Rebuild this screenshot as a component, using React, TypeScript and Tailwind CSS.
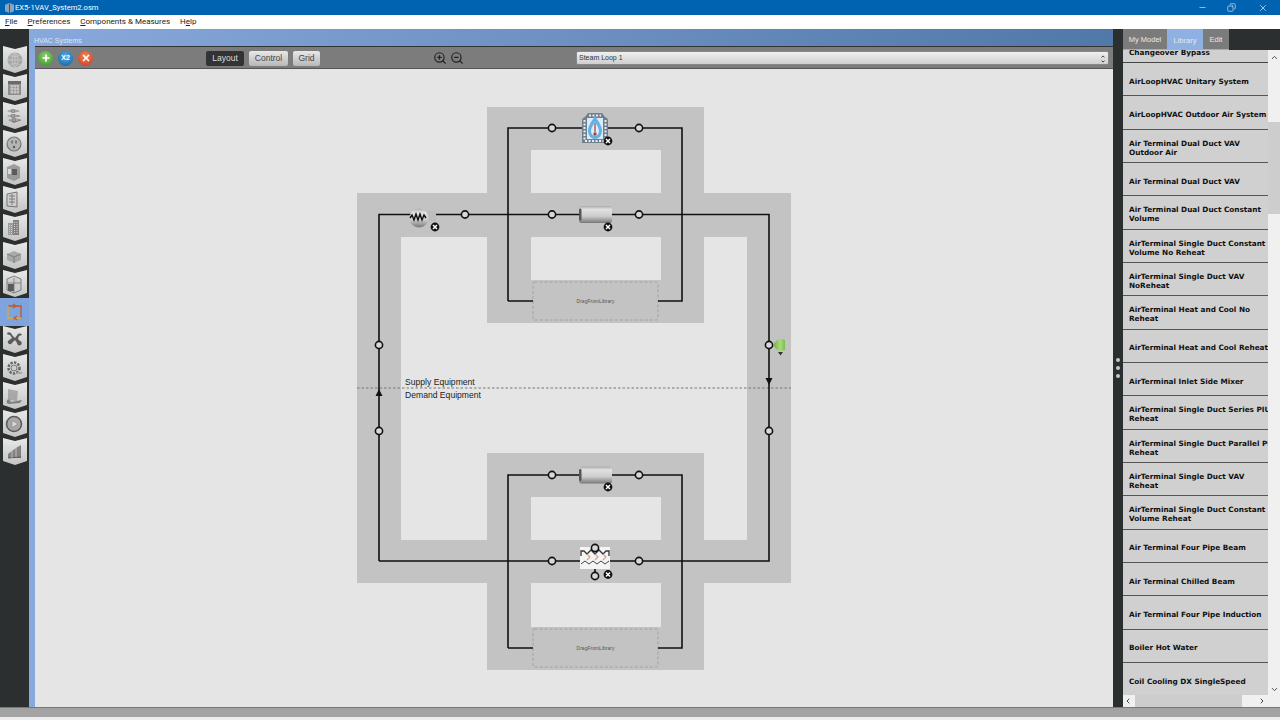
import { useId } from "react";
import { ChevronUp, ChevronDown, ChevronLeft, ChevronRight, Minus, X, Copy, Plus, ZoomIn, ZoomOut } from "lucide-react";

const font = "font-['Liberation_Sans',sans-serif]";

const railIcons = [
  // globe
  <g key="a"><circle cx="11" cy="11" r="7.5" fill="#999" /><path d="M4 11h14M11 3.5v15M6 6c3 2 7 2 10 0M6 16c3-2 7-2 10 0M11 3.5c-4 4-4 11 0 15M11 3.5c4 4 4 11 0 15" stroke="#ccc" strokeWidth=".7" fill="none" /></g>,
  // calendar
  <g key="b"><rect x="4" y="4" width="13" height="14" fill="#777" /><rect x="4" y="4" width="13" height="3" fill="#444" /><path d="M6 9h9M6 12h9M6 15h9M8 8v9M11 8v9M14 8v9" stroke="#ddd" strokeWidth=".9" /></g>,
  // materials stack
  <g key="c"><path d="M3 6l6-2 7 2-7 2zM3 11l6-2 8 2-8 2zM4 15l6-2 8 2-8 3z" fill="#666" /><path d="M5 6h8M5 11h9M6 15h9" stroke="#ddd" strokeWidth=".8" strokeDasharray="2 1" /></g>,
  // outlet
  <g key="d"><circle cx="10" cy="11" r="7" fill="#aaa" stroke="#555" strokeWidth="1.2" /><path d="M8 7.500v3M12 7.500v3" stroke="#333" strokeWidth="1.3" /><circle cx="10" cy="14" r="1.2" fill="#333" /></g>,
  // cube cut
  <g key="e"><path d="M3 6l7-3 6 3v11l-6 3-7-3z" fill="#888" /><rect x="8" y="8" width="5" height="6" fill="#333" /><rect x="4" y="8" width="3" height="5" fill="#ddd" /></g>,
  // facade
  <g key="f"><path d="M3 5l10-2v15l-10-1z" fill="#ccc" stroke="#555" /><path d="M5 7h6M5 10h6M5 13h6M8 5v11" stroke="#555" strokeWidth=".9" /></g>,
  // building
  <g key="g"><rect x="4" y="6" width="5" height="12" fill="#888" /><rect x="9" y="3" width="6" height="15" fill="#666" /><path d="M10.500 5v12M13 5v12M5.500 8v9M7.500 8v9" stroke="#ddd" strokeWidth=".9" strokeDasharray="1 1" /></g>,
  // slab
  <g key="h"><path d="M3 9l7-3 7 3v6l-7 3-7-3z" fill="#999" /><path d="M3 9l7 3 7-3M10 12v6" stroke="#555" strokeWidth=".8" fill="none" /></g>,
  // thermal zones
  <g key="i"><path d="M3 6l7-3 7 3v11l-7 3-7-3z" fill="#ccc" stroke="#555" strokeWidth=".9" /><rect x="4" y="11" width="6" height="7" fill="#333" /><path d="M10 5v15M3 10h14" stroke="#555" strokeWidth=".8" /></g>,
  // hvac loop, selected
  <g key="j" fill="none" strokeWidth="1.3"><path d="M4 5h13v12" stroke="#c0582a" /><path d="M17 17H4V5" stroke="#d9a93a" /><path d="M9 3l3 2-3 2M13 15l-3 2 3 2" stroke="#c0582a" /></g>,
  // tools
  <g key="k"><path d="M3 4c2-2 5 0 5 2l3 3 3-4c2-1 4 0 4 1l-3 1-1 3 2 2c2 0 2 3 1 4-2 1-4 0-4-2l-2-3-4 4c-2 1-4-1-3-3l4-3-2-3c-2 0-3-1-3-2z" fill="#333" /></g>,
  // gear
  <g key="l"><circle cx="10" cy="11" r="5.500" fill="none" stroke="#444" strokeWidth="2.500" strokeDasharray="2.400 1.200" /><circle cx="10" cy="11" r="3" fill="#ccc" stroke="#555" /><path d="M13 15l6 0 -2 2h-5z" fill="#999" /></g>,
  // scroll
  <g key="m"><path d="M4 4l10 2-1 10-9-1z" fill="#999" /><path d="M3 15c2-1 3 0 4 2l11-2-2 3-11 1c-2 0-3-2-2-4z" fill="#666" /></g>,
  // play
  <g key="n"><circle cx="10" cy="11" r="7.500" fill="#999" stroke="#333" strokeWidth="1.600" /><path d="M8 7.500l6 3.500-6 3.500z" fill="#ddd" stroke="#666" strokeWidth=".6" /></g>,
  // results
  <g key="o"><path d="M4 17V13l4-3 4-3 5-3v13z" fill="#666" /><path d="M4 17l13-1" stroke="#333" /><path d="M8 10v7M12 7v9" stroke="#ccc" strokeWidth=".8" /></g>,
];

const items: [string, string?][] = [
  ["AirLoopHVAC Unitary System"],
  ["AirLoopHVAC Outdoor Air System"],
  ["Air Terminal Dual Duct VAV", "Outdoor Air"],
  ["Air Terminal Dual Duct VAV"],
  ["Air Terminal Dual Duct Constant", "Volume"],
  ["AirTerminal Single Duct Constant", "Volume No Reheat"],
  ["AirTerminal Single Duct VAV", "NoReheat"],
  ["AirTerminal Heat and Cool No", "Reheat"],
  ["AirTerminal Heat and Cool Reheat"],
  ["AirTerminal Inlet Side Mixer"],
  ["AirTerminal Single Duct Series PIU", "Reheat"],
  ["AirTerminal Single Duct Parallel PIU", "Reheat"],
  ["AirTerminal Single Duct VAV", "Reheat"],
  ["AirTerminal Single Duct Constant", "Volume Reheat"],
  ["Air Terminal Four Pipe Beam"],
  ["Air Terminal Chilled Beam"],
  ["Air Terminal Four Pipe Induction"],
  ["Boiler Hot Water"],
  ["Coil Cooling DX SingleSpeed"],
];

function RailButton({ children, active }: { children: React.ReactNode; active?: boolean }) {
  return (
    <div className={`w-[29px] h-[28px] relative ${active ? "bg-[#7fa3dc]" : ""}`}>
      <div className={`absolute left-[3px] top-0 w-[24px] h-[27px] flex items-center justify-center [clip-path:polygon(0_0,50%_3px,100%_0,100%_85%,50%_100%,0_85%)] ${active ? "" : "bg-gradient-to-b from-[#e8e8e8] to-[#c4c4c4]"}`}>
        <svg width="22" height="22" viewBox="0 0 22 22" className={active ? "" : "opacity-75"}>{children}</svg>
      </div>
    </div>
  );
}

function Node({ x, y }: { x: number; y: number }) {
  return <circle cx={x} cy={y} r="3.600" fill="#d8d8d8" stroke="#111" strokeWidth="1.600" />;
}

function Remove({ x, y }: { x: number; y: number }) {
  return (
    <g>
      <circle cx={x} cy={y} r="4.400" fill="#111" />
      <path d={`M${x - 2} ${y - 2}l4 4M${x + 2} ${y - 2}l-4 4`} stroke="#fff" strokeWidth="1.500" />
    </g>
  );
}

function Pipe({ x, y, grad }: { x: number; y: number; grad: string }) {
  return (
    <g>
      <rect x={x - 16.5} y={y - 8.5} width="33" height="17" rx="2.500" fill={`url(#${grad})`} />
      <rect x={x - 16.5} y={y - 6} width="2.500" height="12" rx="1.200" fill="#555" />
    </g>
  );
}

function DropZone({ y }: { y: number }) {
  return (
    <g>
      <rect x="533" y={y} width="125" height="38" rx="1.500" fill="#c3c3c3" stroke="#999" strokeWidth=".8" strokeDasharray="3 2" />
      <text x="595.500" y={y + 21} textAnchor="middle" fontSize="5" fill="#555" fontFamily="Liberation Sans, sans-serif">DragFromLibrary</text>
    </g>
  );
}

function Diagram() {
  const id = useId().replace(/:/g, "");
  const grad = `${id}p`;
  const green = `${id}g`;
  const band = "#c3c3c3";
  const line = "#111";
  return (
    <svg className="absolute left-0 top-0" width="1078" height="638" viewBox="35 69 1078 638">
      <defs>
        <linearGradient id={grad} x1="0" y1="0" x2="0" y2="1">
          <stop offset="0" stopColor="#aaa" />
          <stop offset=".2" stopColor="#e2e2e2" />
          <stop offset=".6" stopColor="#ccc" />
          <stop offset="1" stopColor="#777" />
        </linearGradient>
        <linearGradient id={green} x1="0" y1="0" x2="1" y2="0">
          <stop offset="0" stopColor="#6fae3c" />
          <stop offset=".6" stopColor="#a8dc7a" />
          <stop offset="1" stopColor="#7cbf4e" />
        </linearGradient>
      </defs>
      {/* grey bands */}
      <rect x="487" y="107" width="217" height="216" fill={band} />
      <rect x="487" y="453" width="217" height="217" fill={band} />
      <rect x="357" y="193" width="434" height="44" fill={band} />
      <rect x="357" y="540" width="434" height="43" fill={band} />
      <rect x="357" y="193" width="44" height="390" fill={band} />
      <rect x="747" y="193" width="44" height="390" fill={band} />
      <rect x="531" y="150" width="130" height="43" fill="#e5e5e5" />
      <rect x="531" y="237" width="130" height="43" fill="#e5e5e5" />
      <rect x="531" y="497" width="130" height="43" fill="#e5e5e5" />
      <rect x="531" y="583" width="130" height="44" fill="#e5e5e5" />
      <DropZone y={282} />
      <DropZone y={629} />
      {/* supply / demand divider */}
      <path d="M357 388H791" stroke="#777" strokeWidth="1" strokeDasharray="2.500 2" />
      <text x="405" y="385" fontSize="8.600" fill="#222" fontFamily="Liberation Sans, sans-serif">Supply Equipment</text>
      <text x="405" y="398" fontSize="8.600" fill="#222" fontFamily="Liberation Sans, sans-serif">Demand Equipment</text>
      {/* pipes */}
      <g fill="none" stroke={line} strokeWidth="1.600">
        <path d="M508 301V128H682V301H658M533 301H508" />
        <path d="M508 648V475H682V648H658M533 648H508" />
        <path d="M379 561V214.500H769V561H379" />
      </g>
      <path d="M375.500 396l3.500-7 3.500 7zM765.500 378l3.500 7 3.500-7z" fill={line} />
      {[
        [552, 128], [639, 128], [552, 214.5], [639, 214.5], [465, 214.5], [379, 345], [769, 345], [379, 431], [769, 431],
        [552, 475], [639, 475], [552, 561], [639, 561],
      ].map(([x, y]) => <Node key={`${x}-${y}`} x={x} y={y} />)}
      {/* boiler */}
      <path d="M582 143V120q0-2 3-3l3-4h14l3 4q3 1 3 3v23z" fill="#6f7f8c" />
      <path d="M584.500 120v21M605.500 120v21M585 141h20M589 115.500h12" stroke="#e8eef2" strokeWidth="2" strokeDasharray="2 1.500" fill="none" />
      <rect x="587" y="118" width="16" height="21" fill="#dcebf5" />
      <path d="M595 116c4 6 7 10 7 15a7 8 0 0 1-14 0c0-5 3-9 7-15z" fill="#62b2e6" />
      <path d="M595 122c2 3 4 6 4 9a4 5 0 0 1-8 0c0-3 2-6 4-9z" fill="#d8eefa" />
      <path d="M595 123v9" stroke="#b5393a" strokeWidth="1.200" />
      <circle cx="595" cy="134" r="1.700" fill="#b5393a" />
      <Remove x={608} y={141} />
      {/* supply pipe and heater */}
      <Pipe x={595.5} y={214.5} grad={grad} />
      <Remove x={608} y={227} />
      <rect x="425" y="211" width="11" height="10" fill="#bdbdbd" />
      <circle cx="419" cy="218" r="9.500" fill={`url(#${grad})`} />
      <path d="M410 218l2-3 2 5 2-6 2 6 2-6 2 6 2-5 2 3" stroke="#111" strokeWidth="1.400" fill="none" />
      <Remove x={435} y={227} />
      {/* demand pipe */}
      <Pipe x={595.5} y={475} grad={grad} />
      <Remove x={608} y={487} />
      {/* water-to-air coil */}
      <rect x="580" y="547" width="30" height="22" fill="#f4f4f4" />
      <path d="M581 556v-5h3l3 3 4-4 4 4 4-4 4 4 3-3h3v5" stroke="#333" strokeWidth="1.300" fill="none" />
      <path d="M581 564l4-3 4 3 4-3 4 3 4-3 4 3 4-3" stroke="#444" strokeWidth="1" fill="none" />
      <path d="M587 554l3 3-3 3M595 554l3 3-3 3M603 554l3 3-3 3" stroke="#d8a08c" strokeWidth="1.200" fill="none" />
      <path d="M595 551v-3M595 569v4" stroke={line} strokeWidth="1.600" />
      <Node x={595} y={548} />
      <Node x={595} y={576} />
      <Remove x={608} y={574.5} />
      {/* air outlet marker */}
      <path d="M773 345l4-5 q4-2 8 0v10q-4 1.500-8 0z" fill={`url(#${green})`} />
      <path d="M778 352h5l-2.500 3.500z" fill="#333" />
    </svg>
  );
}

export default function App() {
  return (
    <div className={`${font} w-[1280px] h-[720px] overflow-hidden flex flex-col bg-[#2b2f30]`}>
      {/* title bar */}
      <div className="h-[15px] bg-[#0063b1] flex items-center text-white text-[7.600px] pl-[5px] font-['Roboto',sans-serif]">
        <svg width="9" height="10" viewBox="0 0 10 11" className="mr-[1px]">
          <path d="M5 0l5 2v7l-5 2-5-2V2z" fill="#8aa4bd" />
          <path d="M5 1v10" stroke="#33506b" />
        </svg>
        <span>EX5-1VAV_System2.osm</span>
        <div className="ml-auto flex items-center h-full">
          <Minus className="w-[9px] h-[9px] mr-[20px]" strokeWidth={1.5} />
          <Copy className="w-[9px] h-[9px] mr-[22px] -scale-x-100" strokeWidth={1.5} />
          <X className="w-[10px] h-[10px] mr-[12px]" strokeWidth={1.5} />
        </div>
      </div>
      {/* menu */}
      <div className="h-[14px] bg-white flex items-center text-[8px] text-[#222] pl-[5px] gap-[10px] font-['Roboto',sans-serif]">
        <span><u>F</u>ile</span>
        <span><u>P</u>references</span>
        <span><u>C</u>omponents &amp; Measures</span>
        <span>H<u>e</u>lp</span>
      </div>

      <div className="flex-1 flex min-h-0">
        {/* left rail */}
        <div className="w-[29px] pt-[17px] flex flex-col shrink-0">
          {railIcons.map((icon, i) => (
            <RailButton key={i} active={i === 9}>{icon}</RailButton>
          ))}
        </div>

        {/* main area */}
        <div className="w-[1084px] flex flex-col bg-gradient-to-r from-[#88a9dc] to-[#5078a8]">
          <div className="h-[17px] pl-[5px] pt-[7px] flex items-center text-[7px] text-[#dce6f5]">HVAC Systems</div>
          <div className="ml-[6px] flex-1 flex flex-col min-h-0 bg-[#e5e5e5]">
            <div className="h-[23px] shrink-0 bg-[#7c7c7c] border-t border-[#333] border-b-[1px] border-b-[#555] pt-[1px] flex items-center relative">
              <div className="flex items-center gap-[5px] ml-[3px]">
                <span className="w-[15px] h-[15px] rounded-full bg-[radial-gradient(circle_at_50%_35%,#8fd16a,#2f8f2a)] flex items-center justify-center">
                  <Plus className="w-[10px] h-[10px] text-white" strokeWidth={4} />
                </span>
                <span className="w-[15px] h-[15px] rounded-full bg-[radial-gradient(circle_at_50%_35%,#55aee8,#0f5a9e)] flex items-center justify-center text-white text-[7px] font-bold">X2</span>
                <span className="w-[15px] h-[15px] rounded-full bg-[radial-gradient(circle_at_50%_35%,#f08a5a,#c8321e)] flex items-center justify-center">
                  <X className="w-[10px] h-[10px] text-white" strokeWidth={4} />
                </span>
              </div>
              <div className="flex items-center gap-[5px] ml-[113px] text-[8.500px]">
                <span className="h-[15px] w-[38px] rounded-[2px] bg-[#333] text-[#ddd] flex items-center justify-center">Layout</span>
                <span className="h-[15px] w-[39px] rounded-[2px] bg-gradient-to-b from-[#e8e8e8] to-[#b8b8b8] text-[#444] flex items-center justify-center">Control</span>
                <span className="h-[15px] w-[27px] rounded-[2px] bg-gradient-to-b from-[#e8e8e8] to-[#b8b8b8] text-[#444] flex items-center justify-center">Grid</span>
              </div>
              <div className="flex items-center gap-[3px] ml-[113px] text-[#222]">
                <ZoomIn className="w-[14px] h-[14px]" strokeWidth={2} />
                <ZoomOut className="w-[14px] h-[14px]" strokeWidth={2} />
              </div>
              <div className="ml-[112px] w-[533px] h-[14px] rounded-[2px] bg-gradient-to-b from-[#f0f0f0] to-[#cfcfcf] border border-[#888] flex items-center text-[7px] text-[#333] pl-[2px] pr-[2px] pt-[1px]">
                <span>Steam Loop 1</span>
                <span className="ml-auto flex flex-col text-[#222]">
                  <ChevronUp className="w-[6px] h-[5px]" strokeWidth={4} />
                  <ChevronDown className="w-[6px] h-[5px]" strokeWidth={4} />
                </span>
              </div>
            </div>
            <div className="flex-1 relative overflow-hidden min-h-0">
              <Diagram />
            </div>
          </div>
        </div>

        {/* library panel */}
        <div className="flex-1 flex min-w-0 relative">
          <div className="w-[10px] bg-[#2b2f30] shrink-0 flex flex-col items-center justify-center gap-[4px]">
            {[0, 1, 2].map((i) => <span key={i} className="w-[4px] h-[4px] rounded-full bg-[#c8c8c8]" />)}
          </div>
          <div className="flex-1 flex flex-col min-w-0">
            <div className="h-[21px] flex text-[7.500px] text-[#e8e8e8] shrink-0">
              <span className="w-[44px] bg-[#7b7b7b] border-b border-[#8fb0e2] pt-[2px] flex items-center justify-center">My Model</span>
              <span className="w-[36px] bg-[#8fb0e2] pt-[2px] flex items-center justify-center">Library</span>
              <span className="w-[26px] bg-[#7b7b7b] border-b border-[#8fb0e2] pt-[2px] flex items-center justify-center">Edit</span>
            </div>
            <div className="flex-1 flex min-h-0">
              <div className="w-[145px] flex flex-col min-h-0">
                <div className="flex-1 overflow-hidden bg-[#d0d0d0] min-h-0">
                  <div className="h-[13px] border-b border-[#444] flex items-end pb-[5px] pl-[6px] text-[7.300px] leading-[9px] font-['DejaVu_Sans',sans-serif] font-bold text-[#111] whitespace-nowrap">
                    Changeover Bypass
                  </div>
                  {items.map(([a, b]) => (
                    <div key={a + (b ?? "")} className="h-[33.330px] border-b border-[#555] pt-[4px] flex flex-col justify-center pl-[6px] text-[7.300px] leading-[9px] font-['DejaVu_Sans',sans-serif] font-bold text-[#111] whitespace-nowrap overflow-hidden">
                      <span>{a}</span>
                      {b && <span>{b}</span>}
                    </div>
                  ))}
                </div>
                <div className="h-[12px] shrink-0 bg-[#f0f0f0] flex items-center text-[#444]">
                  <ChevronLeft className="w-[8px] h-[8px] ml-[1px]" strokeWidth={3} />
                  <div className="w-[107px] h-full bg-[#cdcdcd] ml-[3px]" />
                  <ChevronRight className="w-[8px] h-[8px] ml-auto mr-[2px]" strokeWidth={3} />
                </div>
              </div>
              <div className="w-[12px] bg-[#f0f0f0] flex flex-col items-center text-[#444] pt-[3px]">
                <ChevronUp className="w-[9px] h-[9px]" strokeWidth={2.5} />
                <div className="w-full h-[92px] bg-[#cdcdcd] mt-[60px]" />
                <ChevronDown className="w-[9px] h-[9px] mt-auto mb-[13px]" strokeWidth={2.5} />
              </div>
            </div>
          </div>
        </div>
      </div>

      {/* status strip */}
      <div className="h-[13px] shrink-0 flex flex-col">
        <div className="h-[10px] bg-[#a3a3a3] border-t border-[#777]" />
        <div className="flex-1 bg-[#ededed]" />
      </div>
    </div>
  );
}
